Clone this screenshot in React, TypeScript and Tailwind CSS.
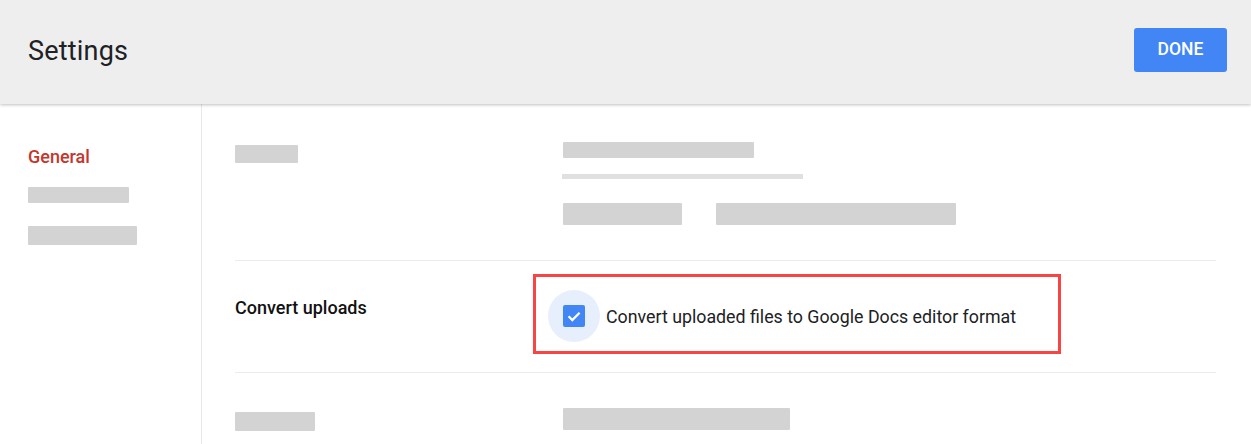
import React from "react";

const Bar = ({ className }: { className: string }) => (
  <div className={`bg-[#d3d3d3] rounded-[1px] ${className}`} />
);

export default function App() {
  return (
    <div className="w-[1251px] h-[444px] overflow-hidden bg-white font-['Roboto',sans-serif]">
      <header className="relative z-10 h-[104px] bg-[#eeeeee] flex items-center justify-between pl-[28px] pr-[24px] shadow-[0_1px_3px_rgba(0,0,0,0.25)]">
        <h1 className="text-[27px] font-normal text-[#202124] leading-none -mt-[2px] tracking-[0.2px]">Settings</h1>
        <button className="-mt-[4px] w-[93px] h-[44px] rounded-[3px] bg-[#4285f4] text-white text-[17.5px] font-medium leading-none">
          DONE
        </button>
      </header>
      <div className="flex h-[340px]">
        <aside className="w-[202px] shrink-0 border-r border-[#e8e8e8] pl-[28px] pt-[41px]">
          <div className="text-[18px] leading-[24px] font-medium text-[#c5372c]">General</div>
          <Bar className="mt-[18px] w-[101px] h-[16px]" />
          <Bar className="mt-[23px] w-[109px] h-[19px]" />
        </aside>
        <main className="flex-1 pl-[33px] pr-[35px]">
          <section className="h-[157px] border-b border-[#ebebeb] flex">
            <div className="w-[328px] pt-[41px]">
              <Bar className="w-[63px] h-[18px]" />
            </div>
            <div className="pt-[38px]">
              <Bar className="w-[191px] h-[16px]" />
              <div className="mt-[16px] -ml-[1px] w-[241px] h-[5px] bg-[#e0e0e0]" />
              <div className="mt-[24px] flex gap-[34px]">
                <Bar className="w-[119px] h-[22px]" />
                <Bar className="w-[240px] h-[22px]" />
              </div>
            </div>
          </section>
          <section className="h-[112px] border-b border-[#ebebeb] flex">
            <div className="w-[298px] pt-[35px]">
              <div className="text-[18px] leading-[24px] font-medium text-[#111111]">Convert uploads</div>
            </div>
            <div className="mt-[13px] w-[528px] h-[80px] border-[3px] border-[#f94444] flex items-center pl-[12px] pt-[3px]">
              <div className="w-[52px] h-[52px] shrink-0 rounded-full bg-[#e8effc] flex items-center justify-center">
                <div className="w-[22px] h-[22px] shrink-0 rounded-[2px] bg-[#4285f4] flex items-center justify-center">
                  <svg width="22" height="22" viewBox="0 0 22 22" className="block">
                    <path d="M5.6 11.3 L9.3 15 L16.6 7.7" fill="none" stroke="white" strokeWidth="2.3" />
                  </svg>
                </div>
              </div>
              <span className="ml-[6px] mt-[2px] text-[17.8px] leading-[24px] text-[#202124]">
                Convert uploaded files to Google Docs editor format
              </span>
            </div>
          </section>
          <section className="flex">
            <div className="w-[328px] pt-[39px]">
              <Bar className="w-[80px] h-[19px]" />
            </div>
            <div className="pt-[35px]">
              <Bar className="w-[227px] h-[22px]" />
            </div>
          </section>
        </main>
      </div>
    </div>
  );
}
